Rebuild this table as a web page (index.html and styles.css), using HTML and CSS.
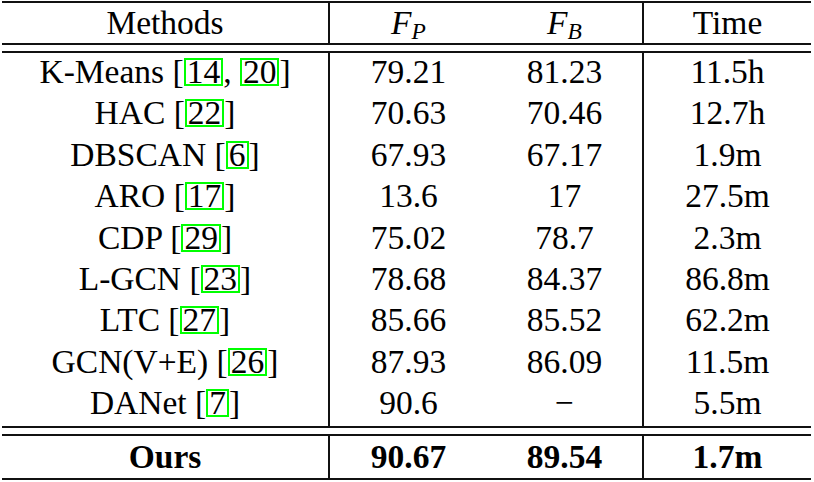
FILE: index.html
```html
<!DOCTYPE html>
<html lang="en">
<head>
    <meta charset="UTF-8">
    <meta name="viewport" content="width=device-width, initial-scale=1.0">
    <title>Clustering Results</title>
    <link rel="stylesheet" href="styles.css">
</head>
<body>
    <table class="results">
        <colgroup>
            <col class="col-method">
            <col class="col-num">
            <col class="col-num">
            <col class="col-time">
        </colgroup>
        <thead>
            <tr>
                <th class="sep">Methods</th>
                <th><i>F</i><sub>P</sub></th>
                <th class="sep"><i>F</i><sub>B</sub></th>
                <th>Time</th>
            </tr>
        </thead>
        <tbody>
            <tr class="gap"><td colspan="4"></td></tr>
            <tr>
                <td class="sep">K-Means [<span class="cite">14</span>, <span class="cite">20</span>]</td>
                <td>79.21</td>
                <td class="sep">81.23</td>
                <td>11.5h</td>
            </tr>
            <tr>
                <td class="sep">HAC [<span class="cite">22</span>]</td>
                <td>70.63</td>
                <td class="sep">70.46</td>
                <td>12.7h</td>
            </tr>
            <tr>
                <td class="sep">DBSCAN [<span class="cite">6</span>]</td>
                <td>67.93</td>
                <td class="sep">67.17</td>
                <td>1.9m</td>
            </tr>
            <tr>
                <td class="sep">ARO [<span class="cite">17</span>]</td>
                <td>13.6</td>
                <td class="sep">17</td>
                <td>27.5m</td>
            </tr>
            <tr>
                <td class="sep">CDP [<span class="cite">29</span>]</td>
                <td>75.02</td>
                <td class="sep">78.7</td>
                <td>2.3m</td>
            </tr>
            <tr>
                <td class="sep">L-GCN [<span class="cite">23</span>]</td>
                <td>78.68</td>
                <td class="sep">84.37</td>
                <td>86.8m</td>
            </tr>
            <tr>
                <td class="sep">LTC [<span class="cite">27</span>]</td>
                <td>85.66</td>
                <td class="sep">85.52</td>
                <td>62.2m</td>
            </tr>
            <tr>
                <td class="sep">GCN(V+E) [<span class="cite">26</span>]</td>
                <td>87.93</td>
                <td class="sep">86.09</td>
                <td>11.5m</td>
            </tr>
            <tr class="last">
                <td class="sep">DANet [<span class="cite">7</span>]</td>
                <td>90.6</td>
                <td class="sep">&minus;</td>
                <td>5.5m</td>
            </tr>
            <tr class="gap"><td colspan="4"></td></tr>
            <tr class="best">
                <td class="sep">Ours</td>
                <td>90.67</td>
                <td class="sep">89.54</td>
                <td>1.7m</td>
            </tr>
        </tbody>
    </table>
</body>
</html>
```

FILE: styles.css
```css
body {
    margin: 0;
    background-color: white;
    color: #000;
}
.results {
    margin: 1px 0 0 2px;
    width: 809px;
    table-layout: fixed;
    border-collapse: separate;
    border-spacing: 0;
    border-top: 2px solid #111;
    border-bottom: 2px solid #111;
    font-family: "Liberation Serif", Tinos, "Nimbus Roman", "DejaVu Serif", serif;
    font-size: 33.5px;
}
.col-method {
    width: 328px;
}
.col-num {
    width: 157px;
}
.col-time {
    width: 167px;
}
th, td {
    padding: 0;
    text-align: center;
    white-space: nowrap;
    font-weight: normal;
    font-family: inherit;
}
th {
    line-height: 40px;
    border-bottom: 2px solid #111;
}
td {
    line-height: 38.4px;
    padding-bottom: 3px;
}
.sep {
    border-right: 2px solid #111;
}
.gap td {
    height: 6px;
    padding: 0;
    line-height: 0;
    font-size: 0;
    border-bottom: 2px solid #111;
}
.last td {
    border-bottom: 2px solid #111;
}
.best td {
    font-weight: bold;
    line-height: 42px;
    padding-bottom: 0;
}
sub {
    font-size: 0.7em;
    line-height: 0;
    vertical-align: -0.22em;
    font-style: italic;
}
.cite {
    display: inline-block;
    line-height: 24px;
    padding: 0 1px;
    border: 2px solid #0f0;
}
```
